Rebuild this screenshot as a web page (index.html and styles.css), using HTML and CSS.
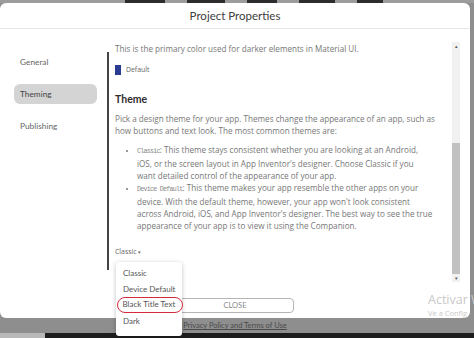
FILE: index.html
```html
<!DOCTYPE html>
<html lang="en">
<head>
    <meta charset="UTF-8">
    <title>Project Properties</title>
    <link rel="stylesheet" href="styles.css">
</head>
<body>
<div class="topbar">
    <span class="tb-item" style="width: 40px"></span>
    <span class="tb-item" style="width: 38px"></span>
    <span class="tb-item" style="width: 30px"></span>
    <span class="tb-item" style="width: 36px"></span>
    <span class="tb-item" style="width: 26px"></span>
</div>

<div class="modal">
    <div class="modal-header">Project Properties</div>

    <div class="modal-body">
        <nav class="sidebar">
            <div class="nav-item">General</div>
            <div class="nav-item active">Theming</div>
            <div class="nav-item">Publishing</div>
        </nav>

        <div class="pane">
            <div class="pane-content">
                <p class="lead">This is the primary color used for darker elements in Material UI.</p>
                <div class="swatch-row">
                    <span class="swatch"></span>
                    <span class="small">Default</span>
                </div>

                <h3>Theme</h3>
                <p>Pick a design theme for your app. Themes change the appearance of an app, such as how buttons and text look. The most common themes are:</p>
                <ul class="theme-list">
                    <li><code>Classic</code>: This theme stays consistent whether you are looking at an Android,<br>
                        iOS, or the screen layout in App Inventor's designer. Choose Classic if you<br>
                        want detailed control of the appearance of your app.</li>
                    <li><code>Device Default</code>: This theme makes your app resemble the other apps on your<br>
                        device. With the default theme, however, your app won't look consistent<br>
                        across Android, iOS, and App Inventor's designer. The best way to see the true<br>
                        appearance of your app is to view it using the Companion.</li>
                </ul>

                <div class="select small">Classic <span class="caret">&#9662;</span></div>
            </div>

            <div class="scrollbar">
                <span class="sb-arrow">&#9652;</span>
                <div class="sb-track"><div class="sb-thumb"></div></div>
                <span class="sb-arrow">&#9662;</span>
            </div>
        </div>
    </div>

    <div class="modal-footer">
        <button class="close-btn">CLOSE</button>
    </div>

    <!-- open dropdown of the theme select -->
    <ul class="menu">
        <li>Classic</li>
        <li>Device Default</li>
        <li class="marked">Black Title Text</li>
        <li>Dark</li>
    </ul>
</div>

<div class="page-footer">
    <a href="#">Privacy Policy and Terms of Use</a>
</div>
<div class="taskbar">
    <span class="tb-left"></span>
    <span class="tb-dark"></span>
</div>

<div class="watermark">
    <div class="wm-title">Activar W</div>
    <div class="wm-sub">Ve a Config</div>
</div>
</body>
</html>
```

FILE: styles.css
```css
* {
    box-sizing: border-box;
    margin: 0;
    padding: 0;
}

body {
    width: 474px;
    height: 338px;
    overflow: hidden;
    font-family: Lato, "Noto Sans", sans-serif;
    background-color: #8e8e8e;
    color: #777;
    position: relative;
}

/* App toolbar peeking out behind the overlay */
.topbar {
    height: 3px;
    background-color: #9c9c9c;
    display: flex;
    gap: 22px;
    padding-left: 125px;
}

.tb-item {
    height: 3px;
    background-color: #2c2c2c;
}

/* Dialog */
.modal {
    position: relative;
    width: 470px;
    height: 315px;
    background: white;
    border-radius: 6px;
    display: flex;
    flex-direction: column;
}

.modal-header {
    height: 26px;
    border-bottom: 1px solid #e6e6e6;
    text-align: center;
    font-size: 11.5px;
    line-height: 25px;
    color: #404040;
}

.modal-body {
    height: 261px;
    display: flex;
}

/* Left navigation */
.sidebar {
    width: 100px;
    padding: 23px 0 0 14px;
    display: flex;
    flex-direction: column;
    gap: 12px;
}

.nav-item {
    width: 83px;
    height: 20px;
    line-height: 20px;
    padding-left: 6px;
    font-size: 8.3px;
    color: #666;
    border-radius: 6px;
}

.nav-item.active {
    background-color: #d4d4d4;
    color: #444;
}

/* Right pane */
.pane {
    flex: 1;
    display: flex;
}

.pane-content {
    width: 343px;
    margin: 23px 0 0 7px;
    height: 218px;
    border-left: 2px solid #444;
    padding-left: 6px;
    font-family: "Open Sans", sans-serif;
    font-size: 8.15px;
    line-height: 12px;
}

.lead {
    margin-top: -9px;
}

.swatch-row {
    display: flex;
    align-items: center;
    gap: 5px;
    margin-top: 10px;
    height: 10px;
}

.swatch {
    width: 6px;
    height: 10px;
    background-color: #2b3a92;
}

.small {
    font-size: 6.9px;
    color: #666;
}

h3 {
    margin-top: 17px;
    font-family: Lato, sans-serif;
    font-size: 10.5px;
    line-height: 14px;
    color: #2e2e2e;
}

.pane-content p {
    width: 322px;
}

h3 + p {
    margin-top: 7px;
}

.theme-list {
    margin-top: 7px;
    padding-left: 22px;
    width: 336px;
}

.theme-list li::marker {
    font-size: 7px;
}

code {
    font-family: "Liberation Mono", "DejaVu Sans Mono", monospace;
    font-size: 6.6px;
    letter-spacing: -0.7px;
    color: #888;
}

.select {
    margin-top: 15px;
    line-height: 10px;
}

.caret {
    font-size: 5px;
}

/* Fake scrollbar */
.scrollbar {
    width: 8px;
    margin: 13px 0 0 2px;
    height: 240px;
    background-color: #f1f1f1;
    display: flex;
    flex-direction: column;
    align-items: center;
}

.sb-arrow {
    font-size: 5px;
    line-height: 8px;
    color: #555;
}

.sb-track {
    flex: 1;
    width: 100%;
    padding-top: 93px;
}

.sb-thumb {
    height: 100%;
    background-color: #c1c1c1;
}

/* Footer */
.modal-footer {
    flex: 1;
    display: flex;
    justify-content: center;
    padding-top: 8px;
}

.close-btn {
    width: 117px;
    height: 15px;
    background: white;
    border: 1px solid #b5b5b5;
    border-radius: 4px;
    font-family: Lato, "Noto Sans", sans-serif;
    font-size: 7.5px;
    color: #8a8a8a;
}

/* Open select menu */
.menu {
    position: absolute;
    left: 116px;
    top: 259px;
    width: 66px;
    padding: 3px 0 7px;
    list-style: none;
    background: white;
    border-radius: 3px;
    box-shadow: 0 1px 4px rgba(0,0,0,0.25);
}

.menu li {
    height: 16px;
    line-height: 16px;
    padding-left: 7px;
    font-size: 8px;
    color: #555;
    white-space: nowrap;
}

.menu li.marked {
    margin: 0 0 0 1px;
    padding-left: 4.5px;
    line-height: 13px;
    border: 1.5px solid #d42a3c;
    border-radius: 8px;
    width: 66px;
}

/* Page under the dialog */
.page-footer {
    height: 15px;
    text-align: center;
    line-height: 15px;
    font-size: 7.5px;
    padding-right: 4px;
}

.page-footer a {
    color: #4a4a4a;
}

.taskbar {
    height: 5px;
    display: flex;
}

.tb-left {
    width: 45px;
    background-color: #b9b9b9;
}

.tb-dark {
    flex: 1;
    background-color: #1d1d1d;
}

/* Windows activation watermark */
.watermark {
    position: absolute;
    left: 428px;
    top: 292px;
    color: #c9c9c9;
    white-space: nowrap;
    font-family: "Open Sans", sans-serif;
}

.wm-title {
    font-size: 12.5px;
    line-height: 16px;
}

.wm-sub {
    font-size: 7.5px;
    line-height: 10px;
}
```
